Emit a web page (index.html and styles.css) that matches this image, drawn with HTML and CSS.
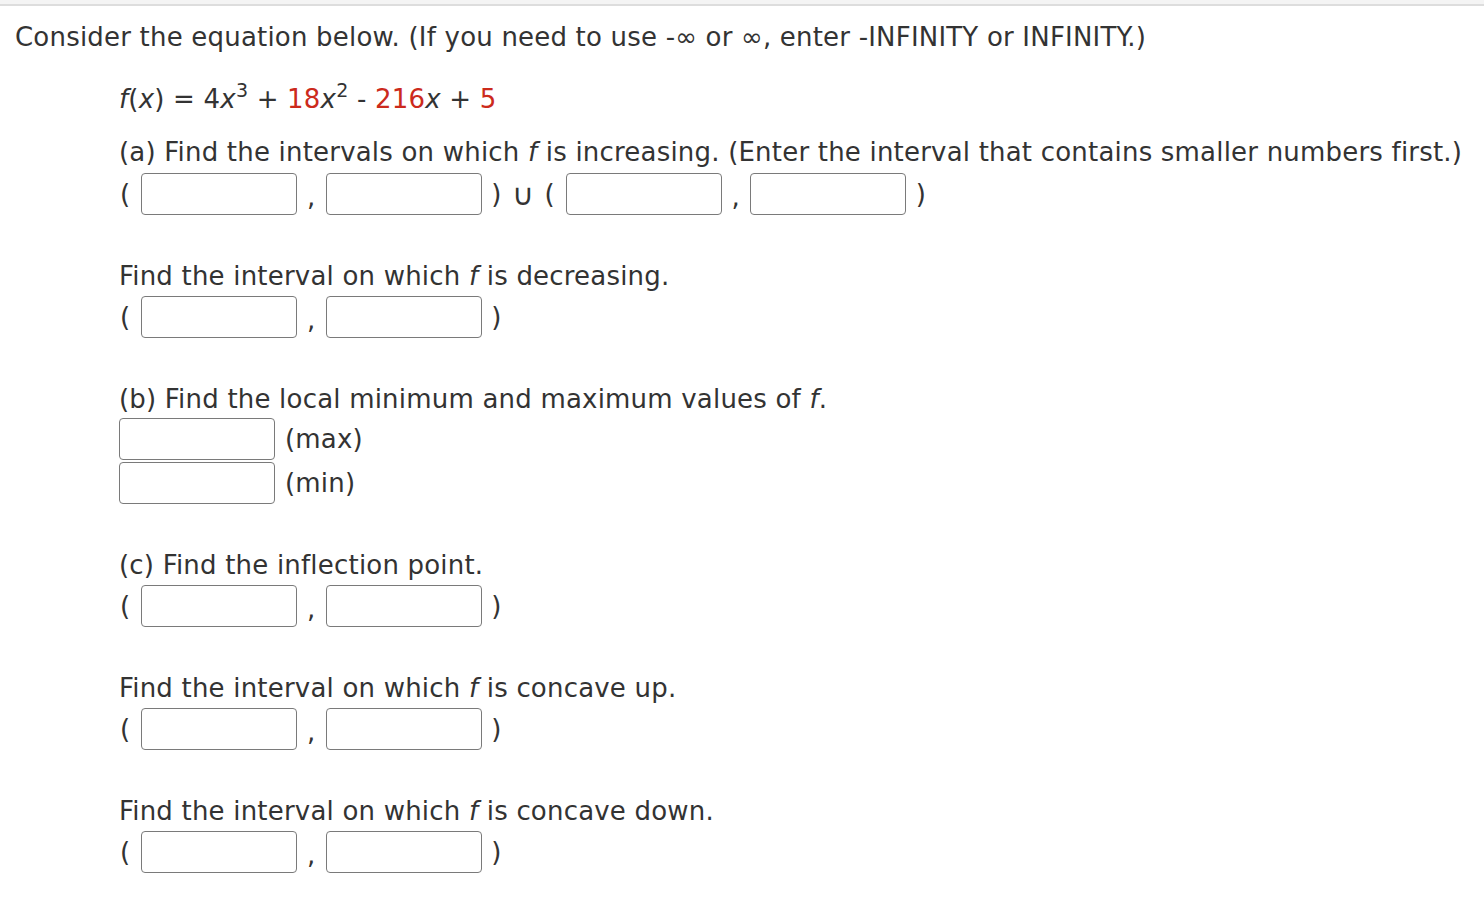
FILE: index.html
```html
<!DOCTYPE html>
<html>
<head>
<meta charset="utf-8">
<link rel="stylesheet" href="styles.css">
</head>
<body>
<div class="topbar"></div>
<div class="content">
  <p class="intro">Consider the equation below. (If you need to use -∞ or ∞, enter -INFINITY or INFINITY.)</p>
  <div class="indent">
    <p class="eq"><i>f</i>(<i>x</i>) = 4<i>x</i><sup>3</sup> + <span class="red">18</span><i>x</i><sup>2</sup> - <span class="red">216</span><i>x</i> + <span class="red">5</span></p>

    <p class="q first">(a) Find the intervals on which <i>f</i> is increasing. (Enter the interval that contains smaller numbers first.)</p>
    <div class="row first">
      <span class="po">(</span><span class="box"></span><span class="cm">,</span><span class="box"></span><span class="pc">)</span><span class="cup">∪</span><span class="po">(</span><span class="box"></span><span class="cm">,</span><span class="box"></span><span class="pc">)</span>
    </div>

    <p class="q">Find the interval on which <i>f</i> is decreasing.</p>
    <div class="row">
      <span class="po">(</span><span class="box"></span><span class="cm">,</span><span class="box"></span><span class="pc">)</span>
    </div>

    <p class="q">(b) Find the local minimum and maximum values of <i>f</i>.</p>
    <div class="row tight">
      <span class="box"></span><span class="lbl">(max)</span>
    </div>
    <div class="row tighter">
      <span class="box"></span><span class="lbl">(min)</span>
    </div>

    <p class="q">(c) Find the inflection point.</p>
    <div class="row">
      <span class="po">(</span><span class="box"></span><span class="cm">,</span><span class="box"></span><span class="pc">)</span>
    </div>

    <p class="q">Find the interval on which <i>f</i> is concave up.</p>
    <div class="row">
      <span class="po">(</span><span class="box"></span><span class="cm">,</span><span class="box"></span><span class="pc">)</span>
    </div>

    <p class="q">Find the interval on which <i>f</i> is concave down.</p>
    <div class="row">
      <span class="po">(</span><span class="box"></span><span class="cm">,</span><span class="box"></span><span class="pc">)</span>
    </div>
  </div>
</div>
</body>
</html>
```
FILE: styles.css
```css
html, body {
  margin: 0;
  padding: 0;
  background: #ffffff;
}
body {
  font-family: "DejaVu Sans", Verdana, sans-serif;
  font-size: 26px;
  letter-spacing: 0.2px;
  color: #333333;
}
.topbar {
  height: 4px;
  background: #f4f4f4;
  border-bottom: 2px solid #dddddd;
}
.content {
  padding: 16px 0 0 15px;
}
p {
  margin: 0;
  line-height: 30px;
  height: 30px;
  white-space: nowrap;
}
.indent {
  padding-left: 104px;
}
.eq {
  margin-top: 32px;
}
sup {
  font-size: 19px;
  line-height: 0;
  vertical-align: 11px;
}
.red {
  color: #cc2a1c;
}
.q {
  margin-top: 46px;
}
.q.first {
  margin-top: 23px;
}
.row {
  display: flex;
  align-items: center;
  height: 42px;
  margin-top: 5px;
  margin-left: 1px;
}
.row.first {
  margin-top: 6px;
}
.row.tight {
  margin-top: 4px;
  margin-left: 0;
}
.row.tighter {
  margin-top: 2px;
  margin-left: 0;
}
.box {
  display: block;
  flex: none;
  width: 154px;
  height: 40px;
  border: 1px solid #7a7a7a;
  border-radius: 4px;
  background: #fff;
}
.po {
  flex: none;
  width: 21px;
  text-align: left;
}
.cm {
  flex: none;
  width: 28.5px;
  text-align: center;
  padding-top: 6px;
}
.pc {
  flex: none;
  width: 20px;
  text-align: right;
}
.cup {
  flex: none;
  width: 43px;
  text-align: center;
  font-size: 30px;
}
.lbl {
  margin-left: 10px;
}
```
